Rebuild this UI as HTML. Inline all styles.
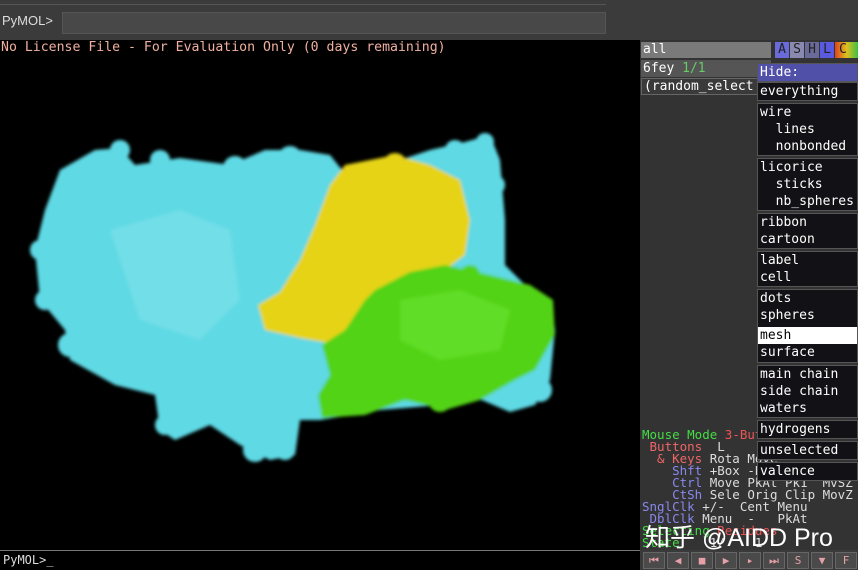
<!DOCTYPE html>
<html><head><meta charset="utf-8"><style>
*{margin:0;padding:0;box-sizing:border-box}
body{width:858px;height:570px;overflow:hidden;background:#000;position:relative;font-family:"DejaVu Sans Mono","Liberation Mono",monospace;font-size:13px}
.a{position:absolute;white-space:pre}
#top{left:0;top:0;width:858px;height:40px;background:#3b3b3b}
#panel{left:640px;top:40px;width:218px;height:510px;background:#333}
.g{position:absolute;left:757px;width:101px;background:#121216;border:1px solid #555;color:#fff;font-size:13px}
.it{height:17px;line-height:17px;padding-left:2px;white-space:pre}
.bt{position:absolute;top:552px;width:22px;height:17px;background:#4a4a4a;border:1px solid #666;color:#e6a0a8;text-align:center;line-height:16px;font-size:11px}
</style></head><body>
<div class="a" id="top"></div>
<div class="a" style="left:0;top:4px;width:606px;height:1px;background:#555"></div>
<div class="a" style="left:2px;top:13px;color:#ddd;font-family:'Liberation Sans',sans-serif;font-size:13px">PyMOL&gt;</div>
<div class="a" style="left:62px;top:12px;width:544px;height:22px;background:#484848;border:1px solid #555"></div>
<div class="a" style="left:1px;top:40px;color:#f0b0a0;font-size:13.2px;line-height:15px">No License File - For Evaluation Only (0 days remaining)</div>

<svg class="a" style="left:0;top:40px" width="640" height="510" viewBox="0 40 640 510">
<defs><filter id="f"><feGaussianBlur stdDeviation="1.5"/></filter></defs>
<g filter="url(#f)">
<g fill="#5fd9e4">
<path d="M60 170 L95 150 L120 148 L135 165 L180 158 L230 165 L265 150 L300 150 L330 155 L350 180 L400 160 L430 150 L465 142 L490 135 L500 160 L505 220 L505 265 L540 300 L555 330 L550 380 L535 405 L510 412 L470 395 L440 405 L380 410 L320 420 L300 420 L295 455 L270 460 L240 445 L210 425 L175 440 L160 430 L155 395 L115 385 L70 360 L65 330 L40 300 L35 250 L45 210 Z"/>
<circle cx="120" cy="150" r="10"/><circle cx="100" cy="165" r="12"/><circle cx="160" cy="160" r="10"/><circle cx="235" cy="168" r="12"/><circle cx="290" cy="158" r="12"/><circle cx="455" cy="150" r="10"/><circle cx="485" cy="142" r="9"/><circle cx="495" cy="185" r="10"/><circle cx="40" cy="250" r="10"/><circle cx="45" cy="300" r="10"/><circle cx="70" cy="345" r="12"/><circle cx="165" cy="425" r="10"/><circle cx="255" cy="450" r="12"/><circle cx="285" cy="450" r="10"/><circle cx="540" cy="390" r="12"/><circle cx="545" cy="330" r="10"/>
</g>
<path fill="#86e3ea" opacity="0.5" d="M110 230 L180 210 L230 230 L240 300 L200 340 L140 320 Z"/>
<g fill="#e6d315">
<path d="M330 185 L345 165 L395 155 L430 165 L460 180 L470 220 L465 255 L445 270 L410 285 L375 300 L372 340 L340 345 L300 338 L265 330 L258 305 L280 292 L300 260 L315 225 Z"/>
<circle cx="395" cy="165" r="12"/><circle cx="450" cy="195" r="12"/><circle cx="275" cy="310" r="13"/><circle cx="350" cy="330" r="12"/>
</g>
<g fill="#52d314">
<path d="M375 290 L410 272 L445 265 L490 275 L530 285 L553 300 L555 335 L535 370 L515 380 L480 400 L445 410 L405 400 L365 415 L322 418 L318 395 L330 375 L322 345 L345 330 L365 300 Z"/>
<circle cx="520" cy="300" r="12"/><circle cx="440" cy="400" r="12"/><circle cx="335" cy="405" r="12"/><circle cx="470" cy="275" r="10"/>
</g>
<path fill="#6ee83a" opacity="0.5" d="M400 300 L460 290 L510 310 L500 350 L440 360 L400 340 Z"/>
</g>
</svg>

<div class="a" style="left:0;top:550px;width:640px;height:1px;background:#777"></div>
<div class="a" style="left:3px;top:553px;color:#ddd;font-size:12px">PyMOL&gt;_</div>

<div class="a" id="panel"></div>
<div class="a" style="left:641px;top:42px;width:130px;height:16px;background:#7a7a7a;color:#fff;line-height:16px;padding-left:2px">all</div>
<div class="a" style="left:775px;top:42px;width:14px;height:16px;background:#6a6ad8;color:#222;text-align:center;line-height:16px">A</div>
<div class="a" style="left:790px;top:42px;width:14px;height:16px;background:#8a8ab0;color:#222;text-align:center;line-height:16px">S</div>
<div class="a" style="left:805px;top:42px;width:14px;height:16px;background:#6a6a9a;color:#222;text-align:center;line-height:16px">H</div>
<div class="a" style="left:820px;top:42px;width:14px;height:16px;background:#5a5ae0;color:#222;text-align:center;line-height:16px">L</div>
<div class="a" style="left:835px;top:42px;width:23px;height:16px;background:linear-gradient(90deg,#e04020,#e0c020,#40c040);color:#222;line-height:16px;padding-left:4px">C</div>
<div class="a" style="left:641px;top:60px;width:130px;height:17px;background:#555;color:#fff;line-height:17px;padding-left:2px">6fey <span style="color:#6c6">1/1</span></div>
<div class="a" style="left:641px;top:78px;width:130px;height:17px;background:#3a3a3a;border:1px solid #666;color:#fff;line-height:15px;padding-left:2px">(random_select</div>

<div class="a" style="left:642px;top:429px;line-height:12px;font-size:12.5px"><span style="color:#4d4">Mouse Mode </span><span style="color:#e55">3-Button</span>
<span style="color:#e66"> Buttons  </span><span style="color:#ddd">L</span>
<span style="color:#e66">  &amp; Keys </span><span style="color:#ddd">Rota Move</span>
<span style="color:#88e">    Shft </span><span style="color:#ddd">+Box -Box</span>
<span style="color:#88e">    Ctrl </span><span style="color:#ddd">Move PkAt Pk1  MvSZ</span>
<span style="color:#88e">    CtSh </span><span style="color:#ddd">Sele Orig Clip MovZ</span>
<span style="color:#88e">SnglClk </span><span style="color:#ddd">+/-  Cent Menu</span>
<span style="color:#88e"> DblClk </span><span style="color:#ddd">Menu  -   PkAt</span>
<span style="color:#4d4">Selecting </span><span style="color:#e55">Residues</span>
<span style="color:#4d4">State </span><span style="color:#ddd">   1/    1</span></div>
<div class="a" style="left:645px;top:518px;color:#fff;font-family:'Liberation Sans','Noto Sans CJK SC',sans-serif;font-size:25px">知乎 @AIDD Pro</div>

<div class="g" style="top:63px;height:19px;background:#5050a8"><div class="it">Hide:</div></div>
<div class="g" style="top:82px;height:19px"><div class="it">everything</div></div>
<div class="g" style="top:103px;height:53px"><div class="it">wire</div><div class="it">  lines</div><div class="it">  nonbonded</div></div>
<div class="g" style="top:158px;height:53px"><div class="it">licorice</div><div class="it">  sticks</div><div class="it">  nb_spheres</div></div>
<div class="g" style="top:213px;height:36px"><div class="it">ribbon</div><div class="it">cartoon</div></div>
<div class="g" style="top:251px;height:36px"><div class="it">label</div><div class="it">cell</div></div>
<div class="g" style="top:289px;height:74px"><div class="it">dots</div><div class="it">spheres</div><div class="it" style="background:#fff;color:#000;margin-top:3px">mesh</div><div class="it">surface</div></div>
<div class="g" style="top:365px;height:53px"><div class="it">main chain</div><div class="it">side chain</div><div class="it">waters</div></div>
<div class="g" style="top:420px;height:19px"><div class="it">hydrogens</div></div>
<div class="g" style="top:441px;height:19px"><div class="it">unselected</div></div>
<div class="g" style="top:462px;height:19px"><div class="it">valence</div></div>

<div class="a" style="left:640px;top:550px;width:218px;height:20px;background:#3a3a3a"></div>
<div class="bt" style="left:643px">⏮</div>
<div class="bt" style="left:667px">◀</div>
<div class="bt" style="left:691px">■</div>
<div class="bt" style="left:715px">▶</div>
<div class="bt" style="left:739px">▸</div>
<div class="bt" style="left:763px">⏭</div>
<div class="bt" style="left:787px">S</div>
<div class="bt" style="left:811px">▼</div>
<div class="bt" style="left:835px">F</div>
</body></html>
